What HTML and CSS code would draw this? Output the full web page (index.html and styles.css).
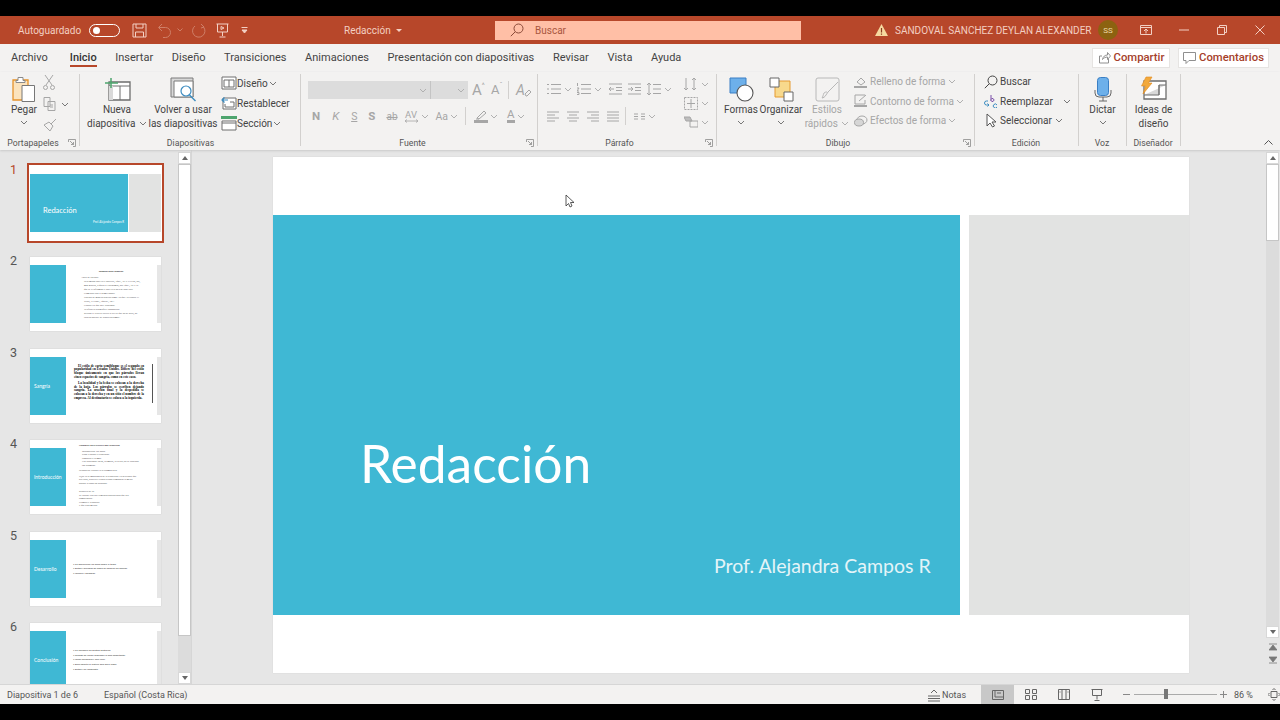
FILE: index.html
```html
<!DOCTYPE html>
<html lang="es">
<head>
<meta charset="utf-8">
<title>Redacción - PowerPoint</title>
<link rel="stylesheet" href="styles.css">
</head>
<body>
<div class="app">
  <header class="titlebar">
    <div class="tb-left">
      <span class="autosave">Autoguardado</span>
      <span class="toggle"><span class="knob"></span></span>
      <svg class="qa qa-save" width="15" height="15" viewBox="0 0 15 15"><path d="M1 1h13v13H1zM4 1v4h7V1M3.500 14V9h8v5" /></svg>
      <svg class="qa qa-undo dim" width="15" height="15" viewBox="0 0 15 15"><path d="M5 1L1.500 4.500 5 8M2 4.500h6.500a5 5 0 0 1 0 10H6"/></svg>
      <svg class="tinychev dim" width="6" height="4" viewBox="0 0 6 4"><path d="M.5.500l2.500 2.500L5.500.500"/></svg>
      <svg class="qa qa-redo dim" width="15" height="15" viewBox="0 0 15 15"><path d="M10 1l3 3-3 1M12.500 4A6.200 6.200 0 1 1 4 3"/></svg>
      <svg class="qa qa-show" width="13" height="15" viewBox="0 0 13 15"><path d="M.5 1h12M1.500 1v8h10V1M6.500 9v4M3.500 14h6M5 3.500l3 1.500-3 1.500z"/></svg>
      <svg class="qa qa-more" width="7" height="7" viewBox="0 0 7 7"><path d="M.5.500h6M1 3l2.500 3L6 3z"/></svg>
      <span class="doc-title">Redacción <i class="caret"></i></span>
    </div>
    <div class="search">
      <svg width="14" height="14" viewBox="0 0 14 14"><circle cx="8.500" cy="5.500" r="4.500"/><path d="M5.200 8.800L.8 13.200"/></svg>
      <span>Buscar</span>
    </div>
    <div class="tb-right">
      <svg class="warn" width="13" height="12" viewBox="0 0 13 12"><path d="M6.500 0L13 12H0z"/><path class="warn-mark" d="M6.500 4v4.500M6.500 9.500v1.200"/></svg>
      <span class="user">SANDOVAL SANCHEZ DEYLAN ALEXANDER</span>
      <span class="avatar">SS</span>
      <svg class="win win-ribbon" width="12" height="10" viewBox="0 0 12 10"><path d="M.5.500h11v9H.5zM.5 2.500h11M6 8.500V4M4 6l2-2 2 2"/></svg>
      <svg class="win win-min" width="10" height="2" viewBox="0 0 10 2"><path d="M0 1h10"/></svg>
      <svg class="win win-max" width="10" height="10" viewBox="0 0 10 10"><path d="M.5 2.500h7v7h-7zM2.500 2.500v-2h7v7h-2"/></svg>
      <svg class="win win-close" width="10" height="10" viewBox="0 0 10 10"><path d="M.5.500l9 9M9.500.500l-9 9"/></svg>
    </div>
  </header>

  <nav class="tabs">
    <span class="tab t-first">Archivo</span>
    <span class="tab t-active">Inicio</span>
    <span class="tab">Insertar</span>
    <span class="tab">Diseño</span>
    <span class="tab">Transiciones</span>
    <span class="tab">Animaciones</span>
    <span class="tab">Presentación con diapositivas</span>
    <span class="tab">Revisar</span>
    <span class="tab">Vista</span>
    <span class="tab">Ayuda</span>
    <span class="tab-btn btn-share">
      <svg width="13" height="13" viewBox="0 0 13 13"><path d="M4 5H1.500v7h9V8M4.500 8.500C5 5.500 7 4 9.500 4V1.500l3 3.500-3 3.500V6C7.500 6 5.500 7 4.500 8.500z"/></svg>
      Compartir
    </span>
    <span class="tab-btn btn-comments">
      <svg width="13" height="12" viewBox="0 0 13 12"><path d="M.5.500h12v8H6l-3 3v-3H.5z"/></svg>
      Comentarios
    </span>
  </nav>

  <section class="ribbon">
    <!-- Portapapeles -->
    <div class="group g-clip">
      <div class="gbody">
        <div class="big b-paste">
          <svg width="24" height="27" viewBox="0 0 24 27"><path fill="#fbe3bd" stroke="#e5932b" stroke-width="1.300" d="M1 4h15v20H1z"/><path fill="#fff" stroke="#8a8a8a" d="M6 1.500h5v3h2v2H4v-2h2z"/><path fill="#fff" stroke="#777" d="M10 9.500h12.500v16H10z"/></svg>
          <span>Pegar</span>
          <svg class="chev" viewBox="0 0 8 5"><path d="M1 1l3 3 3-3"/></svg>
        </div>
        <div class="smallcol sc-clip">
          <svg class="gr" width="12" height="15" viewBox="0 0 12 15"><path d="M2 0l7 10M10 0L3 10"/><circle cx="2.500" cy="12.500" r="2"/><circle cx="9.500" cy="12.500" r="2"/></svg>
          <div class="inline"><svg class="gr" width="14" height="14" viewBox="0 0 14 14"><path d="M1 .5h6v9H1zM5 4.500h7v9H5zM7 8h3M7 10h3"/></svg><svg class="chev" viewBox="0 0 8 5"><path d="M1 1l3 3 3-3"/></svg></div>
          <svg class="gr" width="14" height="14" viewBox="0 0 14 14"><path d="M8 6l5-5M6 4l4 4-3 5-6-6z"/><path d="M3 9l2 2"/></svg>
        </div>
      </div>
      <div class="glabel">Portapapeles</div>
      <svg class="launch" viewBox="0 0 8 8"><path d="M.5 3V.5H7.500v7H5M2 2l3.500 3.500M5.500 3v2.500H3"/></svg>
    </div>

    <!-- Diapositivas -->
    <div class="group g-slides">
      <div class="gbody">
        <div class="big b-new">
          <svg width="27" height="23" viewBox="0 0 27 23"><path fill="#fff" stroke="#6e6e6e" stroke-width="1.300" d="M5 4h21v18H5z"/><path fill="none" stroke="#6e6e6e" d="M5 8h21M16 8v14M5 8"/><path fill="#dadada" d="M5 8h4v14H5z"/><path stroke="#4ea56e" stroke-width="1.500" d="M7 0v10M1 5h13"/></svg>
          <span>Nueva</span>
          <span>diapositiva <svg class="chev in" viewBox="0 0 8 5"><path d="M1 1l3 3 3-3"/></svg></span>
        </div>
        <div class="big b-reuse">
          <svg width="27" height="25" viewBox="0 0 27 25"><path fill="#d8d8d8" stroke="#7b7b7b" d="M1 1h22v19H1z"/><path fill="#fff" stroke="#7b7b7b" d="M4 4h19v16H4z"/><circle cx="16" cy="14" r="5" fill="#fff" stroke="#3c8cc0" stroke-width="1.200"/><path stroke="#3c8cc0" stroke-width="1.400" d="M19.500 18l6 6"/></svg>
          <span>Volver a usar</span>
          <span>las diapositivas</span>
        </div>
        <div class="smallcol sc-slide">
          <div class="srow"><svg width="16" height="14" viewBox="0 0 16 14"><path fill="#fff" stroke="#6e6e6e" d="M1 1h14v12H1z"/><path fill="none" stroke="#6e6e6e" d="M3 4h10v7H3zM8 4v7"/></svg><span>Diseño</span><svg class="chev in" viewBox="0 0 8 5"><path d="M1 1l3 3 3-3"/></svg></div>
          <div class="srow"><svg width="16" height="14" viewBox="0 0 16 14"><path fill="#fff" stroke="#6e6e6e" d="M2 2h13v11H2z"/><path fill="none" stroke="#6e6e6e" d="M9 6h4v5H4V8"/><path fill="none" stroke="#3c8cc0" stroke-width="1.200" d="M1 4h6M3.500 1.500L1 4l2.500 2.500"/></svg><span>Restablecer</span></div>
          <div class="srow"><svg width="16" height="15" viewBox="0 0 16 15"><path fill="#4ea56e" d="M0 0h16v3H0z"/><path fill="#fff" stroke="#6e6e6e" d="M1 5h14v9H1z"/><path stroke="#6e6e6e" d="M1 7h14"/></svg><span>Sección</span><svg class="chev in" viewBox="0 0 8 5"><path d="M1 1l3 3 3-3"/></svg></div>
        </div>
      </div>
      <div class="glabel">Diapositivas</div>
    </div>

    <!-- Fuente -->
    <div class="group g-font off">
      <div class="gbody column">
        <div class="frow row-1">
          <div class="combo c-name"><svg class="chev" viewBox="0 0 8 5"><path d="M1 1l3 3 3-3"/></svg></div>
          <div class="combo c-size"><svg class="chev" viewBox="0 0 8 5"><path d="M1 1l3 3 3-3"/></svg></div>
          <span class="glyph big-a">A<sup>^</sup></span>
          <span class="glyph small-a">A<sup>ˇ</sup></span>
          <i class="vsep"></i>
          <span class="glyph clear-a">A<svg width="8" height="8" viewBox="0 0 8 8"><path d="M1 5l4-4 2 2-4 4H2z"/></svg></span>
        </div>
        <div class="frow row-2">
          <b class="fb">N</b>
          <i class="fb fk">K</i>
          <u class="fb fs">S</u>
          <b class="fb fs2">S</b>
          <s class="fb fab">ab</s>
          <span class="fb fav">AV<svg width="15" height="4" viewBox="0 0 15 4"><path d="M1 2h13M3 .5L1 2l2 1.500M12 .5L14 2l-2 1.500"/></svg></span>
          <svg class="chev" viewBox="0 0 8 5"><path d="M1 1l3 3 3-3"/></svg>
          <span class="fb faa">Aa</span>
          <svg class="chev" viewBox="0 0 8 5"><path d="M1 1l3 3 3-3"/></svg>
          <i class="vsep v2"></i>
          <svg class="hl" width="14" height="14" viewBox="0 0 14 14"><path fill="none" stroke="#a6a6a6" d="M3 9l7-7 2 2-7 6zM2 10h3"/><path fill="#a6a6a6" d="M0 11h14v3H0z"/></svg>
          <svg class="chev" viewBox="0 0 8 5"><path d="M1 1l3 3 3-3"/></svg>
          <span class="fcolor">A</span>
          <svg class="chev" viewBox="0 0 8 5"><path d="M1 1l3 3 3-3"/></svg>
        </div>
      </div>
      <div class="glabel on">Fuente</div>
      <svg class="launch" viewBox="0 0 8 8"><path d="M.5 3V.5H7.500v7H5M2 2l3.500 3.500M5.500 3v2.500H3"/></svg>
    </div>

    <!-- Párrafo -->
    <div class="group g-para off">
      <div class="gbody">
        <div class="pcols">
          <div class="frow prow-1">
            <svg class="li" width="14" height="12" viewBox="0 0 14 12"><path d="M0 1.500h2M0 6h2M0 10.500h2M4 1.500h10M4 6h10M4 10.500h10"/></svg>
            <svg class="chev" viewBox="0 0 8 5"><path d="M1 1l3 3 3-3"/></svg>
            <svg class="li m1" width="14" height="12" viewBox="0 0 14 12"><path d="M.5 0v3M0 5h2L0 8h2M0 9.500h2v2H0M4 1.500h10M4 6h10M4 10.500h10"/></svg>
            <svg class="chev" viewBox="0 0 8 5"><path d="M1 1l3 3 3-3"/></svg>
            <svg class="li m2" width="13" height="12" viewBox="0 0 13 12"><path d="M0 1h13M7 4.500h6M7 7.500h6M0 11h13M5 6H0M2 4L0 6l2 2"/></svg>
            <svg class="li m3" width="13" height="12" viewBox="0 0 13 12"><path d="M0 1h13M7 4.500h6M7 7.500h6M0 11h13M0 6h5M3 4l2 2-2 2"/></svg>
            <svg class="li m4" width="14" height="12" viewBox="0 0 14 12"><path d="M6 1.500h8M6 6h8M6 10.500h8M2 0v12M0 2l2-2 2 2M0 10l2 2 2-2"/></svg>
            <svg class="chev" viewBox="0 0 8 5"><path d="M1 1l3 3 3-3"/></svg>
          </div>
          <div class="frow prow-2">
            <svg class="li" width="12" height="11" viewBox="0 0 12 11"><path d="M0 1h12M0 4h8M0 7h12M0 10h8"/></svg>
            <svg class="li a1" width="12" height="11" viewBox="0 0 12 11"><path d="M0 1h12M2 4h8M0 7h12M2 10h8"/></svg>
            <svg class="li a1" width="12" height="11" viewBox="0 0 12 11"><path d="M0 1h12M4 4h8M0 7h12M4 10h8"/></svg>
            <svg class="li a1" width="12" height="11" viewBox="0 0 12 11"><path d="M0 1h12M0 4h12M0 7h12M0 10h12"/></svg>
            <i class="vsep v3"></i>
            <svg class="li a2" width="11" height="7" viewBox="0 0 11 7"><path d="M0 1h4M7 1h4M0 3.500h4M7 3.500h4M0 6h4M7 6h4"/></svg>
            <svg class="chev" viewBox="0 0 8 5"><path d="M1 1l3 3 3-3"/></svg>
          </div>
        </div>
        <div class="smallcol sc-para">
          <div class="inline"><svg class="li" width="14" height="14" viewBox="0 0 14 14"><path d="M2 1v12M0 11l2 2 2-2M10 1v12M8 3l2-2 2 2M8 11l2 2 2-2"/></svg><svg class="chev" viewBox="0 0 8 5"><path d="M1 1l3 3 3-3"/></svg></div>
          <div class="inline"><svg class="li" width="14" height="13" viewBox="0 0 14 13"><path stroke-dasharray="2 1" d="M.5.5h13v12H.5z"/><path d="M7 2v9M3 6.500h8"/></svg><svg class="chev" viewBox="0 0 8 5"><path d="M1 1l3 3 3-3"/></svg></div>
          <div class="inline"><svg class="li" width="14" height="12" viewBox="0 0 14 12"><path fill="#bdbdbd" d="M0 1h6l2 4H2z"/><path d="M6 5h8v6H6z"/></svg><svg class="chev" viewBox="0 0 8 5"><path d="M1 1l3 3 3-3"/></svg></div>
        </div>
      </div>
      <div class="glabel on">Párrafo</div>
      <svg class="launch" viewBox="0 0 8 8"><path d="M.5 3V.5H7.500v7H5M2 2l3.500 3.500M5.500 3v2.500H3"/></svg>
    </div>

    <!-- Dibujo -->
    <div class="group g-draw">
      <div class="gbody">
        <div class="big b-shapes">
          <svg width="25" height="25" viewBox="0 0 25 25"><path fill="#6db0ea" stroke="#3a7fc4" d="M1 1h16v15H1z"/><circle cx="16" cy="16" r="8" fill="#fff" stroke="#555" stroke-width="1.100"/></svg>
          <span>Formas</span>
          <svg class="chev" viewBox="0 0 8 5"><path d="M1 1l3 3 3-3"/></svg>
        </div>
        <div class="big b-arrange">
          <svg width="25" height="25" viewBox="0 0 25 25"><path fill="#f8d98c" stroke="#e59a30" d="M6 4h15v16H6z"/><path fill="#fff" stroke="#666" d="M1 1h9v9H1zM15 15h9v9h-9z"/></svg>
          <span>Organizar</span>
          <svg class="chev" viewBox="0 0 8 5"><path d="M1 1l3 3 3-3"/></svg>
        </div>
        <div class="big b-styles off">
          <svg width="25" height="25" viewBox="0 0 25 25"><rect x="1" y="1" width="23" height="23" rx="2" fill="none" stroke="#b8b8b8"/><path fill="none" stroke="#b8b8b8" d="M23 5L13 15l-2 3c-1 2-3 3-4 3 1-1 1-3 2-5 1-1 2-1 3-1"/></svg>
          <span>Estilos</span>
          <span>rápidos <svg class="chev in" viewBox="0 0 8 5"><path d="M1 1l3 3 3-3"/></svg></span>
        </div>
        <div class="smallcol sc-draw off">
          <div class="srow"><svg width="14" height="14" viewBox="0 0 14 14"><path fill="none" stroke="#a6a6a6" d="M3 7l4-4 4 4-4 3z"/><path fill="#a6a6a6" d="M0 11h13v2H0z"/></svg><span>Relleno de forma</span><svg class="chev in" viewBox="0 0 8 5"><path d="M1 1l3 3 3-3"/></svg></div>
          <div class="srow"><svg width="14" height="14" viewBox="0 0 14 14"><path fill="none" stroke="#a6a6a6" d="M1 1h10M1 1v9h10V6M5 7l7-6"/><path fill="#a6a6a6" d="M0 11h13v2H0z"/></svg><span>Contorno de forma</span><svg class="chev in" viewBox="0 0 8 5"><path d="M1 1l3 3 3-3"/></svg></div>
          <div class="srow"><svg width="14" height="14" viewBox="0 0 14 14"><ellipse cx="8" cy="6" rx="5" ry="4" fill="none" stroke="#a6a6a6"/><ellipse cx="5" cy="8.500" rx="4.500" ry="3.500" fill="#d6d6d6" stroke="#a6a6a6"/></svg><span>Efectos de forma</span><svg class="chev in" viewBox="0 0 8 5"><path d="M1 1l3 3 3-3"/></svg></div>
        </div>
      </div>
      <div class="glabel on">Dibujo</div>
      <svg class="launch" viewBox="0 0 8 8"><path d="M.5 3V.5H7.500v7H5M2 2l3.500 3.500M5.500 3v2.500H3"/></svg>
    </div>

    <!-- Edición -->
    <div class="group g-edit">
      <div class="gbody">
        <div class="smallcol sc-edit">
          <div class="srow"><svg width="14" height="14" viewBox="0 0 14 14"><circle cx="8.500" cy="5.500" r="4.500" fill="none" stroke="#444"/><path stroke="#444" d="M5.200 8.800L.8 13.200"/></svg><span>Buscar</span></div>
          <div class="srow"><svg class="rep-icon" width="14" height="14" viewBox="0 0 14 14"><path fill="none" stroke="#7a4ea8" d="M7 1v6M7 5.500a1.500 1.500 0 1 1 0 1"/><path fill="none" stroke="#3c8cc0" d="M13 11a2 2 0 1 0 0 2M4 7H2.500a2 2 0 0 0 0 4H5M3.500 9.500L5 11l-1.500 1.500"/></svg><span>Reemplazar</span><svg class="chev in wide" viewBox="0 0 8 5"><path d="M1 1l3 3 3-3"/></svg></div>
          <div class="srow"><svg width="14" height="15" viewBox="0 0 14 15"><path fill="#fff" stroke="#555" d="M3 1l9 8H8l2.500 4-2 1L6 10l-3 3z"/></svg><span>Seleccionar</span><svg class="chev in" viewBox="0 0 8 5"><path d="M1 1l3 3 3-3"/></svg></div>
        </div>
      </div>
      <div class="glabel">Edición</div>
    </div>

    <!-- Voz -->
    <div class="group g-voice">
      <div class="gbody">
        <div class="big b-dictate">
          <svg width="18" height="25" viewBox="0 0 18 25"><rect x="3.500" y=".5" width="11" height="18" rx="3" fill="#6db0ea" stroke="#3a7fc4"/><path fill="none" stroke="#666" d="M1 13v3a4 4 0 0 0 4 4h8a4 4 0 0 0 4-4v-3M9 20v4M5 24h8"/></svg>
          <span>Dictar</span>
          <svg class="chev" viewBox="0 0 8 5"><path d="M1 1l3 3 3-3"/></svg>
        </div>
      </div>
      <div class="glabel">Voz</div>
    </div>

    <!-- Diseñador -->
    <div class="group g-design">
      <div class="gbody">
        <div class="big b-ideas">
          <svg width="27" height="25" viewBox="0 0 27 25"><path fill="#fff" stroke="#6e6e6e" stroke-width="1.300" d="M4 4h22v18H4z"/><path fill="#d8d8d8" stroke="#6e6e6e" d="M4 18h15V8h7M19 8v10"/><path fill="#f2a93b" stroke="#e08a1e" stroke-width=".6" d="M6 0h6L8.500 6H12L3 17l2.500-8H1.500z"/></svg>
          <span>Ideas de</span>
          <span>diseño</span>
        </div>
      </div>
      <div class="glabel">Diseñador</div>
    </div>

    <svg class="collapse" width="9" height="5" viewBox="0 0 9 5"><path d="M.5 4.500l4-4 4 4"/></svg>
  </section>

  <main class="workspace">
    <aside class="panel">
      <div class="thumbs">
        <div class="item current">
          <span class="num">1</span>
          <div class="thumb t-title">
            <div class="t-band">
              <div class="t-blue"><span class="t-h">Redacción</span><span class="t-sub">Prof. Alejandra Campos R</span></div>
              <div class="t-gray"></div>
            </div>
          </div>
        </div>
        <div class="item">
          <span class="num">2</span>
          <div class="thumb">
            <div class="t-side"></div>
            <div class="t-body tb-2">
              <p class="ctr"><b>Técnicas para redactar</b></p>
              <p>Antes de escribir:</p>
              <ul><li>Determinar cuál es el objetivo, "qué", "a" y el texto, así, más general, a quién le escribimos, por "qué", "a" y lo que se le informará y cuál es la idea de todo esto.</li><li>Comenzar con el primer punto.</li><li>Escribir de manera sencilla cómo "lo que" lo conoce el lector, "el cual", "quién", "de".</li><li>Conocer lo que dice la palabra.</li><li>Verificar la ortografía y puntuación.</li><li>Revisar el texto al volver a leer lo que ha de decir, no estar pendiente de redacción simple.</li></ul>
            </div>
            <div class="t-rule"></div>
          </div>
        </div>
        <div class="item">
          <span class="num">3</span>
          <div class="thumb">
            <div class="t-side"><span>Sangría</span></div>
            <div class="t-body tb-3">
              <p>El estilo de carta semibloque es el segundo en popularidad en Estados Unidos. Difiere del estilo bloque únicamente en que los párrafos llevan cinco espacios de sangría, como en este caso.</p>
              <p>La localidad y la fecha se colocan a la derecha de la hoja. Los párrafos se escriben dejando sangría. La oración final y la despedida se colocan a la derecha y en un sitio el nombre de la empresa. Al destinatario se coloca a la izquierda.</p>
            </div>
            <div class="t-bar"></div>
            <div class="t-rule"></div>
          </div>
        </div>
        <div class="item">
          <span class="num">4</span>
          <div class="thumb">
            <div class="t-side"><span>Introducción</span></div>
            <div class="t-body tb-4">
              <p><b>Secuencia para escribir una redacción</b></p>
              <ol><li>Introducción: los datos.</li><li>Ponte a narrar el contenido.</li><li>Organiza el tiempo.</li><li>Los resultados: ideas, ejemplos, lo cierto; no se continúa tan resumido.</li></ol>
              <p>Después de escribir lo revisamos bien.</p>
              <p>¿Qué es la importancia de la redacción? Es necesario que sea clara, sencilla y concreta para comunicar lo mejor posible a todas las personas.</p>
              <p class="gap">Respecto de la:<br>Se escribe con los elementos básicos para que sea comprensible.<br>Ejemplo y respuesta<br>y qué cosa mejora</p>
            </div>
            <div class="t-rule"></div>
          </div>
        </div>
        <div class="item">
          <span class="num">5</span>
          <div class="thumb">
            <div class="t-side"><span>Desarrollo</span></div>
            <div class="t-body tb-5">
              <p>• Se desarrollan las ideas sobre el tema.</p>
              <p>• Datos y pruebas de cómo se afirman los hechos.</p>
              <p>• Ideales y ejemplos.</p>
            </div>
            <div class="t-rule"></div>
          </div>
        </div>
        <div class="item">
          <span class="num">6</span>
          <div class="thumb">
            <div class="t-side"><span>Conclusión</span></div>
            <div class="t-body tb-6">
              <p>• Se resumen los puntos centrales.</p>
              <p>• Recoge de forma ordenada lo más importante.</p>
              <p>• Ideas resumidas y con valor.</p>
              <p>• Deja abierta la lectura final para llegar.</p>
              <p>• Datos y su respuesta.</p>
            </div>
            <div class="t-rule"></div>
          </div>
        </div>
      </div>
      <div class="vscroll vs-panel">
        <span class="sb-btn"><i class="tri up"></i></span>
        <span class="sb-thumb"></span>
        <span class="sb-track"></span>
        <span class="sb-btn"><i class="tri down"></i></span>
      </div>
    </aside>

    <div class="stage">
      <article class="slide">
        <div class="band">
          <div class="blue">
            <h1>Redacción</h1>
            <p>Prof. Alejandra Campos R</p>
          </div>
          <div class="gray"></div>
        </div>
      </article>
      <svg class="cursor" width="10" height="14" viewBox="0 0 10 14"><path d="M1 1v11l2.500-2.500L5 13l2-1-1.500-3.500H9z"/></svg>
    </div>

    <div class="vscroll vs-main">
      <span class="sb-btn"><i class="tri up"></i></span>
      <span class="sb-thumb"></span>
      <span class="sb-track"></span>
      <span class="sb-btn"><i class="tri down"></i></span>
      <span class="sb-jump"><svg width="8" height="8" viewBox="0 0 8 8"><path d="M0 1h8M4 2L0 7h8z"/></svg></span>
      <span class="sb-jump"><svg width="8" height="8" viewBox="0 0 8 8"><path d="M0 7h8M4 6L0 1h8z"/></svg></span>
    </div>
  </main>

  <footer class="status">
    <span class="st-count">Diapositiva 1 de 6</span>
    <span class="st-lang">Español (Costa Rica)</span>
    <span class="st-notes">
      <svg width="14" height="14" viewBox="0 0 14 14"><path d="M1 8h12M1 10.500h12M1 13h12M4 5l3-3 3 3"/></svg>
      Notas
    </span>
    <span class="st-view on"><svg width="12" height="10" viewBox="0 0 12 10"><path d="M.5.500h11v9H.5zM3 .5v6.500h8.500M5 3h4"/></svg></span>
    <span class="st-view"><svg width="12" height="11" viewBox="0 0 12 11"><path d="M.5.500h4v4h-4zM7.500.500h4v4h-4zM.5 6.500h4v4h-4zM7.500 6.500h4v4h-4z"/></svg></span>
    <span class="st-view"><svg width="12" height="11" viewBox="0 0 12 11"><path d="M.5.500h11v10H.5zM4 .5v10M8 .5v10M1.500 3h1M9.500 3h1"/></svg></span>
    <span class="st-view"><svg width="12" height="12" viewBox="0 0 12 12"><path d="M.5.500h11M1.500.500v6h9v-6M6 6.500v4M3.500 11.500h5"/></svg></span>
    <span class="zoom">
      <i class="z-minus"></i>
      <span class="z-track"><i class="z-thumb"></i></span>
      <i class="z-plus"></i>
    </span>
    <span class="st-pct">86 %</span>
    <svg class="st-fit" width="12" height="13" viewBox="0 0 12 13"><path d="M3 3.500h6v6H3zM4.500 2L6 .5 7.500 2M4.500 11L6 12.500 7.500 11M1.500 5L0 6.500 1.500 8M10.500 5L12 6.500 10.500 8"/></svg>
  </footer>
</div>
</body>
</html>
```

FILE: styles.css
```css
* { box-sizing: border-box; }
html, body { margin: 0; height: 100%; background: #000; overflow: hidden; }
body { font-family: Roboto, "Noto Sans", sans-serif; color: #444; }
p, h1, ul, ol { margin: 0; padding: 0; }

.app { height: 720px; padding: 16px 0; display: flex; flex-direction: column; }

/* title bar */
.titlebar { height: 28px; background: #b7472a; display: flex; align-items: center; color: #f3cfc2; font-size: 10px; }
.titlebar svg { fill: none; stroke: #f3d0c4; flex: none; }
.tb-left { width: 495px; display: flex; align-items: center; padding-left: 18px; }
.autosave { width: 71px; white-space: nowrap; font-size: 10px; }
.toggle { width: 31px; height: 13px; border: 1.300px solid #fff; border-radius: 7px; display: flex; align-items: center; padding-left: 3px; }
.knob { width: 7px; height: 7px; background: #fff; border-radius: 50%; }
.qa-save { margin-left: 12px; }
.qa-undo { margin-left: 10px; }
.tinychev { margin-left: 5px; }
.qa-redo { margin-left: 8px; }
.qa-show { margin-left: 10px; }
.qa-more { margin-left: 12px; }
.titlebar svg.dim { stroke: #cf7f68; }
.qa-more { fill: #f3d0c4 !important; }
.doc-title { margin-left: 96px; white-space: nowrap; display: flex; align-items: center; gap: 4px; }
.caret { width: 0; height: 0; border: 3px solid transparent; border-top: 3px solid #f3d0c4; border-bottom: 0; margin-left: 1px; }
.search { width: 306px; height: 19px; background: #ffbfa6; display: flex; align-items: center; color: #a8563e; font-size: 10px; padding-left: 15px; }
.titlebar .search svg { stroke: #8a4a38; margin-right: 11px; }
.tb-right { flex: 1; display: flex; align-items: center; padding-left: 74px; }
.titlebar svg.warn { fill: #f6d9a0; stroke: none; }
.titlebar svg .warn-mark { stroke: #8a3a20; stroke-width: 1.200; }
.user { margin-left: 7px; white-space: nowrap; width: 203px; font-size: 10px; }
.avatar { width: 20px; height: 20px; border-radius: 50%; background: #8c6210; color: #ecd8a8; font-size: 8px; display: flex; align-items: center; justify-content: center; }
.win-ribbon { margin-left: 22px; }
.win-min { margin-left: 27px; }
.win-max { margin-left: 28px; }
.win-close { margin-left: 28px; }

/* tabs */
.tabs { height: 28px; background: #f3f2f1; display: flex; align-items: center; font-size: 11px; color: #444; }
.tab { margin-left: 18.600px; white-space: nowrap; height: 28px; line-height: 27px; position: relative; }
.t-first { margin-left: 11px; }
.t-active { margin-left: 22px; font-weight: 500; color: #333; }
.t-active::after { content: ""; position: absolute; left: 0; right: 0; top: 21px; height: 2px; background: #b7472a; }
.tab-btn { height: 20px; background: #fff; border: 1px solid #e6e4e2; display: flex; align-items: center; justify-content: center; gap: 3px; color: #a5402a; font-weight: 500; font-size: 11.300px; white-space: nowrap; margin-top: -1px; }
.tab-btn svg { fill: none; stroke: #8f8f8f; flex: none; }
.btn-share { width: 78px; margin-left: auto; }
.btn-comments { width: 91px; margin: -1px 11px 0 8px; }

/* ribbon */
.ribbon { height: 78px; background: #f3f2f1; display: flex; position: relative; font-size: 10px; color: #444; box-shadow: 0 1px 2px #c9c9c9; z-index: 2; }
.group { display: flex; flex-direction: column; position: relative; flex: none; }
.group::after { content: ""; position: absolute; right: 0; top: 2px; bottom: 4px; width: 1px; background: #d2d0ce; }
.gbody { height: 64px; display: flex; }
.gbody.column { flex-direction: column; }
.glabel { height: 14px; line-height: 14px; text-align: center; font-size: 8.700px; color: #555; white-space: nowrap; padding-right: 2px; }
.launch { position: absolute; right: 4px; bottom: 3px; width: 8px; height: 8px; fill: none; stroke: #8a8a8a; stroke-width: .8; }
.off { color: #a6a6a6; }
.off .glabel.on, .glabel.on { color: #555; }

.g-clip { width: 80px; }
.g-clip .glabel { padding-right: 14px; }
.g-slides { width: 221px; }
.g-slides .glabel { padding-right: 0; }
.g-font { width: 237px; }
.g-font .glabel { padding-right: 14px; }
.g-para { width: 179px; }
.g-para .glabel { padding-right: 16px; }
.g-draw { width: 258px; }
.g-draw .glabel { padding-right: 16px; }
.g-edit { width: 104px; }
.g-voice { width: 48px; }
.g-design { width: 54px; }

.big { display: flex; flex-direction: column; align-items: center; padding-top: 4px; line-height: 14px; white-space: nowrap; flex: none; }
.big > svg:first-child { height: 27px; flex: none; }
.big > span { display: block; height: 14px; }
.big > .chev { margin-top: 3px; }
.chev { width: 8px; height: 5px; fill: none; stroke: #777; flex: none; }
.off .chev { stroke: #b0b0b0; }
.chev.in { display: inline-block; margin-left: 1px; vertical-align: 1px; }
.chev.wide { margin-left: 8px; }
.gr { fill: none; stroke: #a6a6a6; flex: none; }

.b-paste { width: 26px; margin-left: 11px; }
.sc-clip { margin-left: 6px; align-items: flex-start; padding-top: 3px; gap: 5px; }
.smallcol { display: flex; flex-direction: column; }
.inline { display: flex; align-items: center; gap: 4px; height: 18px; }

.b-new { width: 60px; margin-left: 7px; }
.b-reuse { width: 68px; margin-left: 2px; }
.sc-slide { margin-left: 4px; padding-top: 1px; }
.sc-slide .srow { height: 20px; gap: 0; }
.srow { height: 19.500px; display: flex; align-items: center; gap: 2px; white-space: nowrap; }
.srow > svg:first-child { width: 16px; flex: none; }
.srow > span { font-size: 10px; }

/* font group */
.frow { display: flex; align-items: center; }
.row-1 { height: 18px; margin-top: 9px; padding-left: 7px; }
.combo { height: 18px; background: #dcdcdc; display: flex; align-items: center; justify-content: flex-end; padding-right: 3px; }
.c-name { width: 123px; border-right: 1px solid #c4c4c4; }
.c-size { width: 37px; }
.glyph { color: #a6a6a6; line-height: 18px; white-space: nowrap; display: flex; align-items: center; }
.glyph sup { font-size: 7px; line-height: 8px; margin-top: -8px; }
.big-a { font-size: 15px; margin-left: 4px; width: 18px; }
.small-a { font-size: 13px; margin-left: 1px; width: 16px; }
.row-1 .vsep { margin: 0 7px 0 1px; }
.vsep { width: 1px; height: 18px; background: #d2d0ce; flex: none; }
.clear-a { font-size: 14px; font-style: italic; }
.clear-a svg { fill: none; stroke: #a6a6a6; margin-left: -1px; margin-top: 5px; }
.row-2 { height: 18px; margin-top: 8px; padding-left: 11px; color: #a6a6a6; font-size: 11.500px; }
.fb { flex: none; font-style: normal; text-decoration: none; }
b.fb { font-weight: 700; }
.fk { font-style: italic; margin-left: 12px; }
.fs { text-decoration: underline; margin-left: 12px; font-size: 10.500px; }
.fs2 { margin-left: 11px; }
.fab { text-decoration: line-through; margin-left: 11px; font-size: 10px; }
.fav { display: flex; flex-direction: column; align-items: center; font-size: 9.500px; line-height: 9px; margin-left: 6px; }
.fav svg { fill: none; stroke: #a6a6a6; stroke-width: .8; }
.row-2 .chev { margin-left: 2px; }
.faa { margin-left: 7px; font-size: 10.500px; }
.v2 { margin-left: 7px; }
.hl { margin-left: 8px; flex: none; }
.fcolor { margin-left: 9px; border-bottom: 3px solid #a6a6a6; line-height: 11px; font-size: 11.500px; }

/* paragraph group */
.pcols { width: 146px; padding-left: 9px; }
.li { fill: none; stroke: #a6a6a6; flex: none; }
.prow-1 { height: 18px; margin-top: 8px; }
.prow-1 .chev { margin-left: 3px; }
.prow-1 .m1 { margin-left: 5px; }
.prow-1 .m2 { margin-left: 7px; }
.prow-1 .m3 { margin-left: 6px; }
.prow-1 .m4 { margin-left: 6px; }
.prow-2 { height: 18px; margin-top: 9px; }
.a1 { margin-left: 8px; }
.v3 { margin: 0 8px 0 6px; }
.prow-2 .chev { margin-left: 3px; }
.sc-para { padding-top: 3px; gap: 1px; margin-left: 0; }
.sc-para .inline { gap: 3px; }

/* drawing group */
.b-shapes { width: 34px; margin-left: 7px; }
.b-arrange { width: 46px; margin-left: 0; }
.b-styles { width: 44px; margin-left: 1px; }
.sc-draw { margin-left: 5px; padding-top: 0; }
.sc-draw .srow { gap: 1px; }
.sc-draw .srow > svg:first-child { width: 14px; }
.sc-draw .srow > span { margin-left: 1px; }

/* edit */
.sc-edit { margin-left: 9px; padding-top: 0; }
.sc-edit .srow { gap: 2px; }
.sc-edit .srow > svg:first-child { width: 14px; }
.b-dictate { width: 47px; }
.b-ideas { width: 53px; }

.collapse { position: absolute; right: 7px; bottom: 5px; fill: none; stroke: #555; }

/* workspace */
.workspace { flex: 1; min-height: 0; display: flex; background: #e6e6e6; }
.panel { width: 192px; flex: none; display: flex; border-right: 1px solid #d6d6d6; }
.thumbs { width: 178px; overflow: hidden; padding-top: 16px; display: flex; flex-direction: column; gap: 17.400px; }
.item { display: flex; flex: none; }
.num { width: 30px; padding-left: 10px; font-size: 12.500px; line-height: 12px; color: #555; flex: none; margin-top: -2px; }
.current .num { color: #b7472a; }
.thumb { width: 131px; height: 74px; background: #fff; display: flex; position: relative; box-shadow: 0 0 1px #bcbcbc; flex: none; overflow: hidden; }
.current .thumb { overflow: visible; box-shadow: 0 0 0 1px #fff, 0 0 0 3px #b7472a; }
.t-title { padding-top: 8px; }
.t-band { display: flex; width: 100%; height: 58px; gap: 1px; }
.t-blue { width: 98px; background: #3fb8d4; display: flex; flex-direction: column; padding: 32px 0 0 13px; color: #fff; }
.t-h { font-family: Lato, sans-serif; font-size: 7.500px; line-height: 9px; }
.t-sub { font-family: Lato, sans-serif; font-size: 2.800px; line-height: 3px; margin: 6px 0 0 50px; white-space: nowrap; }
.t-gray { flex: 1; background: #e2e3e2; }
.t-side { width: 36px; height: 58px; margin-top: 8px; background: #3fb8d4; flex: none; color: #fff; font-family: Lato, sans-serif; font-size: 5px; display: flex; align-items: center; padding-left: 4px; white-space: nowrap; }
.t-rule { width: 4px; height: 58px; margin-top: 8px; background: #e6e6e6; position: absolute; right: 0; top: 0; }
.t-bar { width: 1px; height: 39px; background: #555; position: absolute; right: 8px; top: 15px; }
.t-body { color: #333; font-family: "Liberation Serif", serif; }
.t-body ul, .t-body ol { list-style: none; }
.tb-2 { width: 60px; margin: 13px 0 0 15px; font-size: 2.500px; line-height: 4px; }
.tb-2 .ctr { text-align: center; margin-bottom: 2px; color: #111; }
.tb-2 ul { padding-left: 3px; }
.tb-3 { width: 70px; margin: 16px 0 0 8px; font-size: 3.300px; line-height: 3.600px; font-weight: 700; color: #000; text-align: justify; }
.tb-3 p { text-indent: 4px; margin-bottom: 3px; }
.tb-4 { width: 60px; margin: 4px 0 0 13px; font-size: 2.500px; line-height: 3.500px; }
.tb-4 p { margin-bottom: 2px; }
.tb-4 ol { padding-left: 3px; margin-bottom: 2px; }
.tb-4 .gap { margin-top: 5px; }
.tb-5 { width: 70px; margin: 31px 0 0 7px; font-family: Lato, sans-serif; font-size: 2.500px; line-height: 4.700px; }
.tb-6 { width: 70px; margin: 26px 0 0 7px; font-family: Lato, sans-serif; font-size: 2.500px; line-height: 4.700px; }

.vscroll { width: 13px; display: flex; flex-direction: column; flex: none; }
.sb-btn { height: 12px; background: #fff; display: flex; align-items: center; justify-content: center; flex: none; border: 1px solid #d8d8d8; }
.sb-thumb { background: #fff; border: 1px solid #c6c6c6; flex: none; }
.sb-track { background: #dcdcdc; flex: none; }
.tri { width: 0; height: 0; border-left: 3.500px solid transparent; border-right: 3.500px solid transparent; }
.tri.up { border-bottom: 4px solid #666; }
.tri.down { border-top: 4px solid #666; }
.vs-panel { margin: 2px 0 0 0; }
.vs-panel .sb-thumb { height: 472px; }
.vs-panel .sb-track { height: 36px; }
.vs-main { margin: 2px 1px 0 0; }
.vs-main .sb-thumb { height: 77px; }
.vs-main .sb-track { height: 385px; }
.sb-jump { height: 13px; display: flex; align-items: center; justify-content: center; }
.vs-main .sb-btn + .sb-jump { margin-top: 2px; }
.sb-jump svg { fill: #777; stroke: #777; stroke-width: .8; }

.stage { flex: 1; position: relative; padding: 7px 0 0 81px; }
.slide { width: 916px; height: 516px; background: #fff; padding-top: 58px; box-shadow: 0 0 1px #c6c6c6; }
.band { display: flex; height: 400px; gap: 9px; }
.blue { width: 687px; background: #3fb8d4; color: #fff; display: flex; flex-direction: column; font-family: Lato, sans-serif; padding: 214px 0 0 87px; }
.blue h1 { font-weight: 400; font-size: 51.500px; line-height: 68px; }
.blue p { font-size: 19.500px; line-height: 26px; margin: 56px 0 0 354px; white-space: nowrap; color: #e4f4f8; }
.gray { flex: 1; background: #e2e3e2; }
.cursor { position: absolute; left: 373px; top: 44px; fill: #fff; stroke: #333; stroke-width: .8; }

/* status */
.status { height: 20px; background: #f3f2f1; border-top: 1px solid #d6d6d6; display: flex; align-items: center; font-size: 9px; color: #555; white-space: nowrap; }
.status svg { fill: none; stroke: #666; flex: none; }
.st-count { margin-left: 7px; width: 97px; }
.st-lang { width: 823px; }
.st-notes { width: 54px; display: flex; align-items: center; gap: 1px; }
.st-view { width: 33px; height: 19px; display: flex; align-items: center; justify-content: center; }
.st-view.on { background: #c8c8c8; }
.zoom { display: flex; align-items: center; margin-left: 10px; width: 105px; }
.z-minus { width: 7px; height: 1px; background: #888; margin-right: 4px; }
.z-track { width: 83px; height: 1px; background: #aaa; position: relative; display: block; }
.z-thumb { position: absolute; left: 30px; top: -5px; width: 4px; height: 10px; background: #777; }
.z-plus { width: 7px; height: 7px; margin-left: 3px; background: linear-gradient(#888,#888) center/7px 1px no-repeat, linear-gradient(#888,#888) center/1px 7px no-repeat; }
.st-pct { width: 30px; margin-left: 6px; }
.st-fit { margin-left: 4px; }
```
